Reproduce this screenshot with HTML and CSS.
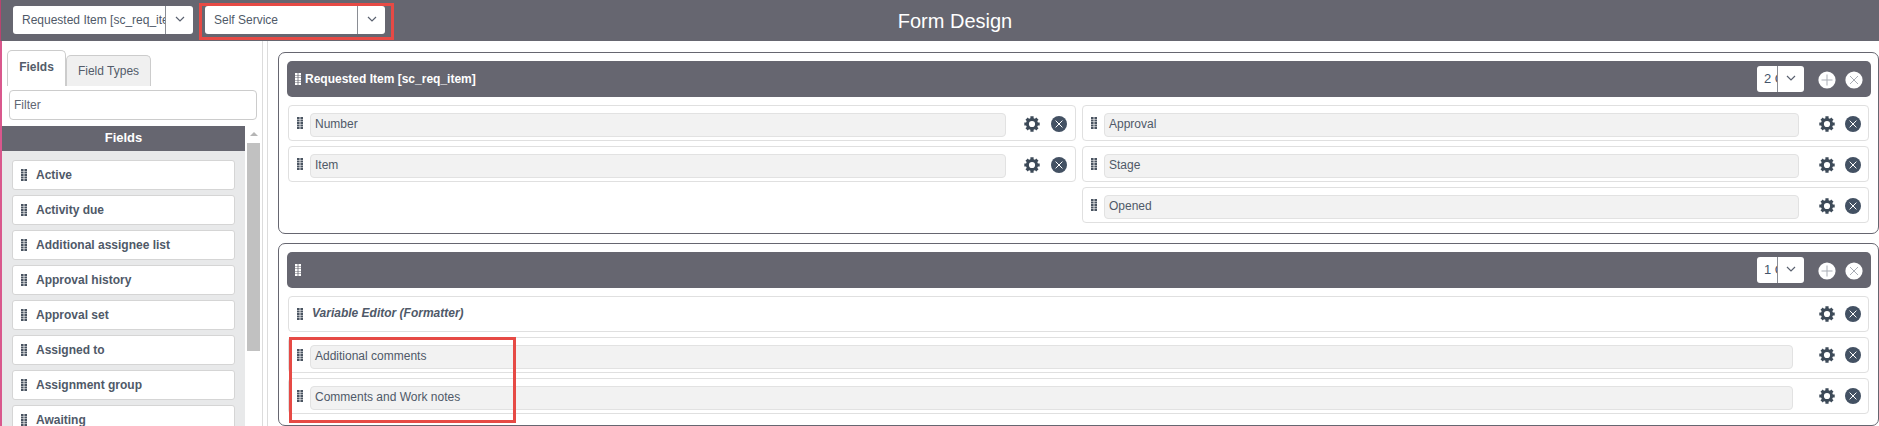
FILE: index.html
```html
<!DOCTYPE html>
<html lang="en">
<head>
<meta charset="utf-8">
<title>Form Design</title>
<link rel="stylesheet" href="styles.css">
</head>
<body>
<svg class="defs" width="0" height="0" aria-hidden="true">
  <symbol id="grip" viewBox="0 0 6 12">
    <g fill="currentColor">
      <rect x="0" y="0" width="2.6" height="2"/><rect x="3.4" y="0" width="2.6" height="2"/>
      <rect x="0" y="2.5" width="2.6" height="2"/><rect x="3.4" y="2.5" width="2.6" height="2"/>
      <rect x="0" y="5" width="2.6" height="2"/><rect x="3.4" y="5" width="2.6" height="2"/>
      <rect x="0" y="7.5" width="2.6" height="2"/><rect x="3.4" y="7.5" width="2.6" height="2"/>
      <rect x="0" y="10" width="2.6" height="2"/><rect x="3.4" y="10" width="2.6" height="2"/>
    </g>
  </symbol>
  <symbol id="gear" viewBox="0 0 16 16">
    <circle cx="8" cy="8" r="4.6" fill="none" stroke="#3d4a58" stroke-width="3"/>
    <g stroke="#3d4a58" stroke-width="3.2">
      <path d="M8 0.3V3.5M8 12.5V15.7M0.3 8H3.5M12.5 8H15.7M2.6 2.6L4.8 4.8M11.2 11.2L13.4 13.4M13.4 2.6L11.2 4.8M4.8 11.2L2.6 13.4"/>
    </g>
  </symbol>
  <symbol id="close" viewBox="0 0 16 16">
    <circle cx="8" cy="8" r="8" fill="#435163"/>
    <path d="M4.6 4.6L11.4 11.4M11.4 4.6L4.6 11.4" stroke="#fff" stroke-width="1" fill="none"/>
  </symbol>
  <symbol id="close-light" viewBox="0 0 18 18">
    <circle cx="9" cy="9" r="8.6" fill="#fff"/>
    <path d="M5 5L13 13M13 5L5 13" stroke="#a9adb5" stroke-width="1" fill="none"/>
  </symbol>
  <symbol id="plus-light" viewBox="0 0 18 18">
    <circle cx="9" cy="9" r="8.6" fill="#fff"/>
    <path d="M9 3.5V14.5M3.5 9H14.5" stroke="#a9adb5" stroke-width="1" fill="none"/>
  </symbol>
  <symbol id="chev" viewBox="0 0 10 6">
    <path d="M1 1L5 5L9 1" fill="none" stroke="#5b6270" stroke-width="1.2"/>
  </symbol>
</svg>

<header class="topbar">
  <div class="select select-table">
    <span class="select-text">Requested Item [sc_req_item]</span>
    <span class="select-btn"><svg class="chev"><use href="#chev"/></svg></span>
  </div>
  <div class="callout-select">
    <div class="select select-view">
      <span class="select-text">Self Service</span>
      <span class="select-btn"><svg class="chev"><use href="#chev"/></svg></span>
    </div>
  </div>
  <h1 class="title">Form Design</h1>
</header>

<div class="workspace">
  <aside class="panel">
    <div class="tabs">
      <span class="tab tab-active">Fields</span>
      <span class="tab">Field Types</span>
    </div>
    <div class="filter">Filter</div>
    <div class="fields-wrap">
      <div class="fields-col">
        <div class="fields-head">Fields</div>
        <ul class="fields-list">
          <li class="field-item"><svg class="grip"><use href="#grip"/></svg>Active</li>
          <li class="field-item"><svg class="grip"><use href="#grip"/></svg>Activity due</li>
          <li class="field-item"><svg class="grip"><use href="#grip"/></svg>Additional assignee list</li>
          <li class="field-item"><svg class="grip"><use href="#grip"/></svg>Approval history</li>
          <li class="field-item"><svg class="grip"><use href="#grip"/></svg>Approval set</li>
          <li class="field-item"><svg class="grip"><use href="#grip"/></svg>Assigned to</li>
          <li class="field-item"><svg class="grip"><use href="#grip"/></svg>Assignment group</li>
          <li class="field-item"><svg class="grip"><use href="#grip"/></svg>Awaiting</li>
        </ul>
      </div>
      <div class="scrollbar">
        <span class="scroll-up"></span>
        <span class="scroll-thumb"></span>
      </div>
    </div>
  </aside>
  <div class="divider"></div>
  <main class="main">
    <section class="section">
      <div class="section-head">
        <svg class="grip grip-light"><use href="#grip"/></svg>
        <span class="section-title">Requested Item [sc_req_item]</span>
        <div class="col-select"><span class="col-text">2 Columns</span><span class="col-btn"><svg class="chev"><use href="#chev"/></svg></span></div>
        <svg class="head-icon"><use href="#plus-light"/></svg>
        <svg class="head-icon"><use href="#close-light"/></svg>
      </div>
      <div class="cols">
        <div class="col">
          <div class="row"><svg class="grip"><use href="#grip"/></svg><span class="field">Number</span><svg class="gear"><use href="#gear"/></svg><svg class="close"><use href="#close"/></svg></div>
          <div class="row"><svg class="grip"><use href="#grip"/></svg><span class="field">Item</span><svg class="gear"><use href="#gear"/></svg><svg class="close"><use href="#close"/></svg></div>
        </div>
        <div class="col">
          <div class="row"><svg class="grip"><use href="#grip"/></svg><span class="field">Approval</span><svg class="gear"><use href="#gear"/></svg><svg class="close"><use href="#close"/></svg></div>
          <div class="row"><svg class="grip"><use href="#grip"/></svg><span class="field">Stage</span><svg class="gear"><use href="#gear"/></svg><svg class="close"><use href="#close"/></svg></div>
          <div class="row"><svg class="grip"><use href="#grip"/></svg><span class="field">Opened</span><svg class="gear"><use href="#gear"/></svg><svg class="close"><use href="#close"/></svg></div>
        </div>
      </div>
    </section>
    <section class="section section-single">
      <div class="section-head">
        <svg class="grip grip-light"><use href="#grip"/></svg>
        <span class="section-title"></span>
        <div class="col-select"><span class="col-text">1 Column</span><span class="col-btn"><svg class="chev"><use href="#chev"/></svg></span></div>
        <svg class="head-icon"><use href="#plus-light"/></svg>
        <svg class="head-icon"><use href="#close-light"/></svg>
      </div>
      <div class="cols-one">
        <div class="row"><svg class="grip"><use href="#grip"/></svg><span class="formatter">Variable Editor (Formatter)</span><svg class="gear"><use href="#gear"/></svg><svg class="close"><use href="#close"/></svg></div>
        <div class="row"><svg class="grip"><use href="#grip"/></svg><span class="field">Additional comments</span><svg class="gear"><use href="#gear"/></svg><svg class="close"><use href="#close"/></svg></div>
        <div class="row"><svg class="grip"><use href="#grip"/></svg><span class="field">Comments and Work notes</span><svg class="gear"><use href="#gear"/></svg><svg class="close"><use href="#close"/></svg></div>
      </div>
      <div class="callout-fields"></div>
    </section>
  </main>
</div>
</body>
</html>
```

FILE: styles.css
```css
* { box-sizing: border-box; }
html, body { margin: 0; padding: 0; height: 426px; overflow: hidden; background: #fff; }
body { font-family: "Liberation Sans", Arial, sans-serif; color: #4b5563; }
.defs { position: absolute; }

.topbar {
  height: 41px;
  background: #666670;
  display: flex;
  align-items: flex-start;
  padding: 6px 0 0 12px;
  border-left: 1px solid #b8446f;
}
.select {
  display: flex;
  width: 180px;
  height: 28px;
  background: #fff;
  border-radius: 3px;
  font-size: 12px;
  color: #4f5968;
  overflow: hidden;
}
.select-text {
  flex: 1;
  min-width: 0;
  padding: 7px 0 0 9px;
  white-space: nowrap;
  overflow: hidden;
}
.select-btn {
  width: 28px;
  border-left: 1px solid #8a8d94;
  display: flex;
  align-items: center;
  justify-content: center;
}
.chev { width: 10px; height: 6px; margin-top: -3px; }
.callout-select {
  margin: -3px 0 0 6px;
  padding: 0 6px 3px 3px;
  border: 3px solid #e64a45;
  height: 37px;
}
.title {
  flex: 1;
  margin: 0;
  padding: 3px 363px 0 0;
  text-align: center;
  color: #fff;
  font-size: 20px;
  font-weight: 400;
  line-height: 24px;
}

.workspace { display: flex; height: 385px; overflow: hidden; }
.panel {
  width: 262px;
  flex: none;
  border-left: 2px solid #d9588d;
  padding-top: 9px;
  display: flex;
  flex-direction: column;
}
.tabs {
  display: flex;
  align-items: flex-end;
  height: 36px;
  padding-left: 5px;
}
.tab {
  width: 85px;
  height: 31px;
  background: #f0f0f0;
  border: 1px solid #ccc;
  border-bottom: 0;
  border-radius: 5px 5px 0 0;
  font-size: 12px;
  text-align: center;
  line-height: 30px;
  color: #535c6a;
}
.tab-active {
  width: 59px;
  height: 36px;
  background: #fff;
  font-weight: 700;
  line-height: 32px;
}
.filter {
  margin: 4px 5px 0 7px;
  height: 30px;
  border: 1px solid #ccc;
  border-radius: 4px;
  font-size: 12px;
  line-height: 28px;
  padding-left: 4px;
  color: #5f6773;
}
.fields-wrap { display: flex; margin-top: 6px; flex: 1; min-height: 0; }
.fields-col { width: 243px; flex: none; background: #e8e9ea; }
.fields-head {
  height: 25px;
  background: #666670;
  color: #fff;
  font-size: 13px;
  font-weight: 700;
  text-align: center;
  line-height: 24px;
}
.fields-list { list-style: none; margin: 0; padding: 9px 10px 0; }
.field-item {
  display: flex;
  align-items: center;
  height: 30px;
  margin-bottom: 5px;
  background: #fff;
  border: 1px solid #d5d5d5;
  border-radius: 3px;
  font-size: 12px;
  font-weight: 700;
  color: #4f5968;
  padding: 0 0 1px 8px;
}
.field-item .grip { margin-right: 9px; }
.scrollbar {
  width: 15px;
  margin-left: 1px;
  display: flex;
  flex-direction: column;
  align-items: center;
}
.scroll-up {
  margin-top: 6px;
  width: 0;
  height: 0;
  border-left: 4px solid transparent;
  border-right: 4px solid transparent;
  border-bottom: 4px solid #b5b5b5;
}
.scroll-thumb { margin-top: 7px; width: 13px; height: 208px; background: #c1c1c1; }

.divider {
  width: 6px;
  flex: none;
  border-left: 1px solid #dcdcdc;
  border-right: 1px solid #dcdcdc;
}
.main { flex: 1; min-width: 0; padding: 11px 0 0 10px; display: flex; flex-direction: column; gap: 9px; }
.section {
  border: 1px solid #666670;
  border-radius: 7px;
  padding: 8px 7px 11px 8px;
  height: 182px;
  flex: none;
  position: relative;
}
.section-single { height: 183px; }
.section-head {
  height: 36px;
  background: #666670;
  border-radius: 5px;
  display: flex;
  align-items: center;
  padding: 0 8px;
  color: #fff;
}
.grip { width: 6px; height: 12px; color: #4a5461; flex: none; }
.grip-light { color: #fff; }
.section-title { flex: 1; margin-left: 4px; font-size: 12px; font-weight: 700; }
.col-select {
  display: flex;
  width: 47px;
  height: 26px;
  background: #fff;
  border-radius: 3px;
  overflow: hidden;
  margin-right: 14px;
}
.col-text {
  width: 20px;
  flex: none;
  padding: 5px 0 0 7px;
  font-size: 13px;
  color: #44546a;
  white-space: nowrap;
  overflow: hidden;
}
.col-btn {
  flex: 1;
  border-left: 1px solid #8a8d94;
  display: flex;
  align-items: center;
  justify-content: center;
}
.head-icon { width: 18px; height: 18px; flex: none; margin-top: 1px; }
.head-icon + .head-icon { margin-left: 9px; }

.cols {
  display: grid;
  grid-template-columns: 788px 1fr;
  gap: 6px;
  margin: 8px 2px 0 1px;
}
.cols-one {
  margin: 8px 2px 0 1px;
  display: flex;
  flex-direction: column;
  gap: 5px;
}
.col { display: flex; flex-direction: column; gap: 5px; }
.row {
  display: flex;
  align-items: flex-start;
  height: 36px;
  background: #fff;
  border: 1px solid #e0e0e0;
  border-radius: 4px;
  padding: 7px 7px 0 8px;
}
.col:first-child .row { padding-right: 8px; }
.col:first-child .gear { margin-left: 18px; }
.col:first-child .close { margin-left: 11px; }
.row .grip { margin-top: 4px; margin-right: 7px; }
.field {
  flex: 1;
  min-width: 0;
  height: 24px;
  background: #f2f2f2;
  border: 1px solid #e2e2e2;
  border-radius: 4px;
  font-size: 12px;
  line-height: 21px;
  padding-left: 4px;
  color: #4f5968;
}
.formatter {
  flex: 1;
  min-width: 0;
  height: 20px;
  padding-left: 2px;
  line-height: 19px;
  font-size: 12px;
  font-weight: 700;
  font-style: italic;
  color: #4f5968;
}
.gear { width: 16px; height: 16px; margin: 3px 0 0 20px; flex: none; }
.close { width: 16px; height: 16px; margin: 3px 0 0 10px; flex: none; }
.cols-one .gear { margin: 2px 0 0 26px; }
.cols-one .close { margin-top: 2px; }

.callout-fields {
  position: absolute;
  left: 10px;
  top: 93px;
  width: 227px;
  height: 86px;
  border: 3px solid #e64a45;
  pointer-events: none;
}
```
